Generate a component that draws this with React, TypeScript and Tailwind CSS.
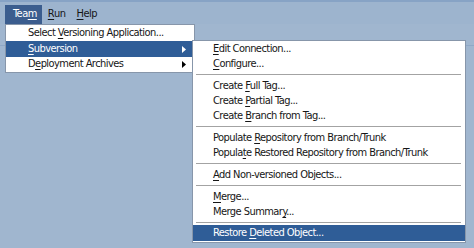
import React from 'react';

type Item = { pre: string; key: string; post: string; sep?: boolean; active?: boolean };

const sub: Item[] = [
  { pre: '', key: 'E', post: 'dit Connection...' },
  { pre: '', key: 'C', post: 'onfigure...', sep: true },
  { pre: 'Create ', key: 'F', post: 'ull Tag...' },
  { pre: 'Create ', key: 'P', post: 'artial Tag...' },
  { pre: 'Create ', key: 'B', post: 'ranch from Tag...', sep: true },
  { pre: 'Populate ', key: 'R', post: 'epository from Branch/Trunk' },
  { pre: 'Popula', key: 't', post: 'e Restored Repository from Branch/Trunk', sep: true },
  { pre: '', key: 'A', post: 'dd Non-versioned Objects...', sep: true },
  { pre: '', key: 'M', post: 'erge...' },
  { pre: 'Merge Summar', key: 'y', post: '...', sep: true },
  { pre: 'Restore ', key: 'D', post: 'eleted Object...', active: true },
];

function Label({ item }: { item: Item }) {
  return (
    <span className="whitespace-pre">
      {item.pre}
      <span className="underline underline-offset-2">{item.key}</span>
      {item.post}
    </span>
  );
}

function Arrow({ white }: { white?: boolean }) {
  return (
    <svg width="4" height="7" viewBox="0 0 4 7" className="ml-auto mr-[8px]">
      <path d="M0 0 L4 3.5 L0 7 Z" fill={white ? '#ffffff' : '#000000'} />
    </svg>
  );
}

export default function App() {
  return (
    <div
      className="relative w-[474px] h-[248px] overflow-hidden bg-[#a0b6cf] text-[11px] tracking-[-0.55px] text-[#161616]"
      style={{ fontFamily: '"DejaVu Sans Condensed", "DejaVu Sans", sans-serif' }}
    >
      {/* menubar */}
      <div className="h-[2px] bg-[#87a3c5]" />
      <div className="flex h-[22px] items-stretch bg-[#9db4ce] pl-[5px] pt-[3px]">
        <div className="flex items-center pl-[8px] pr-[5px] bg-[#3b5d8e] text-white">
          Tea<span className="underline underline-offset-2">m</span>
        </div>
        <div className="flex items-center pl-[6px] pr-[11px]">
          <span className="underline underline-offset-2">R</span>un
        </div>
        <div className="flex items-center">
          <span className="underline underline-offset-2">H</span>elp
        </div>
      </div>
      <div className="h-[22px] border-b border-[#8fa8c6]" />

      {/* team dropdown */}
      <div className="absolute left-[5px] top-[24px] w-[190px] bg-white border border-[#8796aa] pt-[1px]">
        <div className="flex items-center h-[15px] pl-[22px]">
          <Label item={{ pre: 'Select ', key: 'V', post: 'ersioning Application...' }} />
        </div>
        <div className="flex items-center h-[16px] pl-[22px] bg-[#2f5d97] text-white">
          <Label item={{ pre: '', key: 'S', post: 'ubversion' }} />
          <Arrow white />
        </div>
        <div className="flex items-center h-[15px] pl-[22px]">
          <Label item={{ pre: 'D', key: 'e', post: 'ployment Archives' }} />
          <Arrow />
        </div>
      </div>

      {/* subversion submenu */}
      <div className="absolute left-[192px] top-[40px] w-[274px] bg-white border border-[#8796aa] py-[1px]">
        {sub.map((item, i) => (
          <div key={i}>
            <div
              className={
                item.active
                  ? 'flex items-center h-[16px] pl-[20px] bg-[#2f5d97] text-white'
                  : 'flex items-center h-[15px] pl-[20px]'
              }
            >
              <Label item={item} />
            </div>
            {item.sep && (
              <div
                className={
                  sub[i + 1]?.active
                    ? 'ml-[3px] mr-[4px] mt-[2px] mb-[2px] h-px bg-[#a3a3a3]'
                    : 'ml-[3px] mr-[4px] mt-[2px] mb-[4px] h-px bg-[#a3a3a3]'
                }
              />
            )}
          </div>
        ))}
      </div>
    </div>
  );
}
